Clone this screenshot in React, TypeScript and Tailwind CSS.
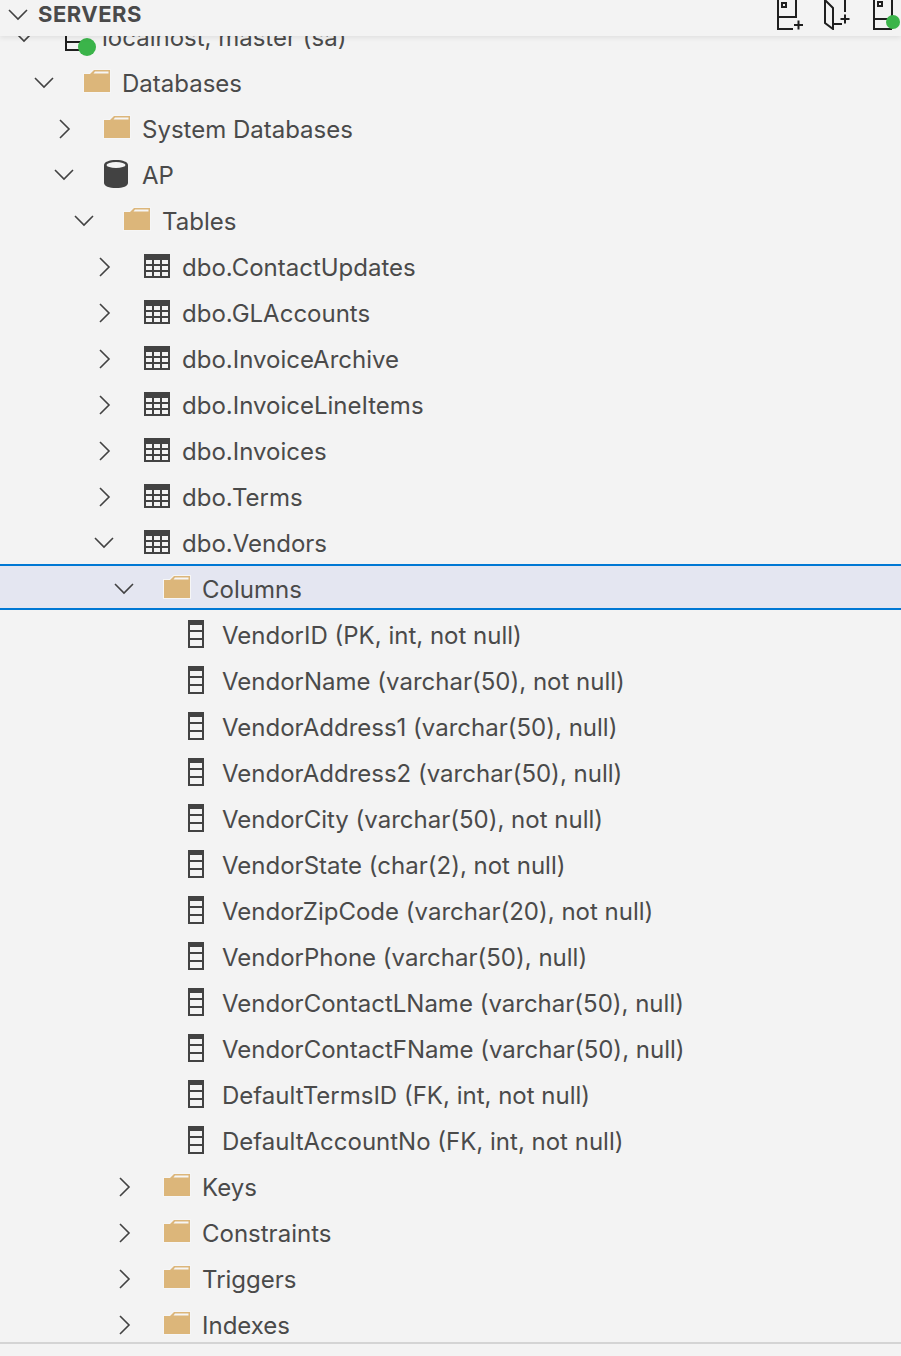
import { ReactNode } from "react";

const CHEVRON_DOWN = "M2 6l9 9 9-9";
const CHEVRON_RIGHT = "M7 2l9 9-9 9";

function Chevron({ open }: { open: boolean }) {
  return (
    <svg width="22" height="22" viewBox="0 0 22 22" fill="none" stroke="#424242" strokeWidth="1.6" className="mt-1">
      <path d={open ? CHEVRON_DOWN : CHEVRON_RIGHT} />
    </svg>
  );
}

function FolderIcon() {
  return (
    <svg width="26" height="22" viewBox="0 0 26 22" className="block overflow-visible">
      <path d="M0 4H6L10 0H26V22H0z" fill="#dcb67a" stroke="#f6f6f6" strokeWidth="2" paintOrder="stroke" />
      <path d="M9.5 3.5L11 1.5H24.5V3.5z" fill="#f6f6f6" />
    </svg>
  );
}

function DatabaseIcon() {
  return (
    <svg width="24" height="28" viewBox="0 0 24 28" className="mt-0.5 block">
      <path d="M0 5c0-3 5-5 12-5s12 2 12 5v18c0 3-5 5-12 5S0 26 0 23z" fill="#424242" />
      <ellipse cx="12" cy="5" rx="9.5" ry="3" fill="#f3f3f3" />
    </svg>
  );
}

function TableIcon() {
  return (
    <svg width="26" height="24" viewBox="0 0 26 24" className="mt-0.5 block">
      <path
        fillRule="evenodd"
        fill="#424242"
        d="M0 0H26V24H0zM2 6V10H8V6zM10 6V10H16V6zM18 6V10H24V6zM2 12V16H8V12zM10 12V16H16V12zM18 12V16H24V12zM2 18V22H8V18zM10 18V22H16V18zM18 18V22H24V18z"
      />
    </svg>
  );
}

function ColumnIcon() {
  return (
    <svg width="16" height="28" viewBox="0 0 16 28" className="ml-1 mt-0.5 block">
      <path
        fillRule="evenodd"
        fill="#424242"
        d="M0 0H16V28H0zM2 5V10H14V5zM2 12V18H14V12zM2 20V26H14V20z"
      />
    </svg>
  );
}

function ServerIcon() {
  return (
    <svg width="30" height="32" viewBox="0 0 30 32" className="block">
      <path d="M2 0V31H17M2 23H17" fill="none" stroke="#1f1f1f" strokeWidth="2" />
    </svg>
  );
}

function Row({
  level,
  open,
  icon,
  selected,
  children,
}: {
  level: number;
  open?: boolean;
  icon: ReactNode;
  selected?: boolean;
  children: ReactNode;
}) {
  return (
    <div
      className={
        selected
          ? "flex h-[46px] items-center border-y-2 border-[#0078d4] bg-[#e4e6f1]"
          : "flex h-[46px] items-center"
      }
      style={{ paddingLeft: 4 + 20 * level }}
    >
      <div className="flex w-10 shrink-0 justify-center">
        {open !== undefined && <Chevron open={open} />}
      </div>
      <div className="flex w-[58px] shrink-0 items-center pl-5">{icon}</div>
      <span className="whitespace-nowrap pt-[5px]">{children}</span>
    </div>
  );
}

const tables = [
  "dbo.ContactUpdates",
  "dbo.GLAccounts",
  "dbo.InvoiceArchive",
  "dbo.InvoiceLineItems",
  "dbo.Invoices",
  "dbo.Terms",
];

const columns = [
  "VendorID (PK, int, not null)",
  "VendorName (varchar(50), not null)",
  "VendorAddress1 (varchar(50), null)",
  "VendorAddress2 (varchar(50), null)",
  "VendorCity (varchar(50), not null)",
  "VendorState (char(2), not null)",
  "VendorZipCode (varchar(20), not null)",
  "VendorPhone (varchar(50), null)",
  "VendorContactLName (varchar(50), null)",
  "VendorContactFName (varchar(50), null)",
  "DefaultTermsID (FK, int, not null)",
  "DefaultAccountNo (FK, int, not null)",
];

const folders = ["Keys", "Constraints", "Triggers", "Indexes"];

export default function App() {
  return (
    <div className="h-[1356px] w-[901px] overflow-hidden bg-[#f3f3f3] font-['Inter',sans-serif] text-[24px] text-[#4a4a4a]">
      <div className="relative z-10 flex h-9 items-start justify-between bg-[#f3f3f3] shadow-[0_2px_5px_rgba(0,0,0,0.08)]">
        <div className="flex h-7 items-center">
          <svg width="22" height="22" viewBox="0 0 22 22" fill="none" stroke="#424242" strokeWidth="1.6" className="ml-[7px] mt-[1px]">
            <path d={CHEVRON_DOWN} />
          </svg>
          <span className="ml-[9px] text-[22px] font-bold tracking-[0.5px]">SERVERS</span>
        </div>
        <div className="flex items-start">
          <svg width="28" height="30" viewBox="0 0 28 30" fill="none" stroke="#1f1f1f" strokeWidth="2" className="mr-5">
            <path d="M2 0V29H17M2 17H20V0M6 3h4v4H6zM18 25h9M22.5 20.5v9" />
          </svg>
          <svg width="26" height="30" viewBox="0 0 26 30" fill="none" stroke="#1f1f1f" strokeWidth="2" className="mr-[23px]">
            <path d="M1 0V23L9 29V8L1 0M9 24H18M21 0V12M16.5 19h9M21 14.5v9" />
          </svg>
          <div className="relative w-7 shrink-0">
            <svg width="28" height="30" viewBox="0 0 28 30" fill="none" stroke="#1f1f1f" strokeWidth="2">
              <path d="M1 0V29H19M1 19H19M19 0V29M5 2h4v4H5z" />
            </svg>
            <span className="absolute left-[13px] top-[15px] h-3.5 w-3.5 rounded-full bg-[#3bb44a]" />
          </div>
        </div>
      </div>

      <div className="mt-[-24px] h-[1332px] overflow-hidden border-b-2 border-[#d4d4d4]">
        <Row
          level={0}
          open
          icon={
            <div className="relative">
              <ServerIcon />
              <span className="absolute left-[14px] top-[19px] h-[18px] w-[18px] rounded-full bg-[#3bb44a]" />
            </div>
          }
        >
          localhost, master (sa)
        </Row>
        <Row level={1} open icon={<FolderIcon />}>Databases</Row>
        <Row level={2} open={false} icon={<FolderIcon />}>System Databases</Row>
        <Row level={2} open icon={<DatabaseIcon />}>AP</Row>
        <Row level={3} open icon={<FolderIcon />}>Tables</Row>
        {tables.map((name) => (
          <Row key={name} level={4} open={false} icon={<TableIcon />}>{name}</Row>
        ))}
        <Row level={4} open icon={<TableIcon />}>dbo.Vendors</Row>
        <Row level={5} open selected icon={<FolderIcon />}>Columns</Row>
        {columns.map((name) => (
          <Row key={name} level={6} icon={<ColumnIcon />}>{name}</Row>
        ))}
        {folders.map((name) => (
          <Row key={name} level={5} open={false} icon={<FolderIcon />}>{name}</Row>
        ))}
      </div>
    </div>
  );
}
